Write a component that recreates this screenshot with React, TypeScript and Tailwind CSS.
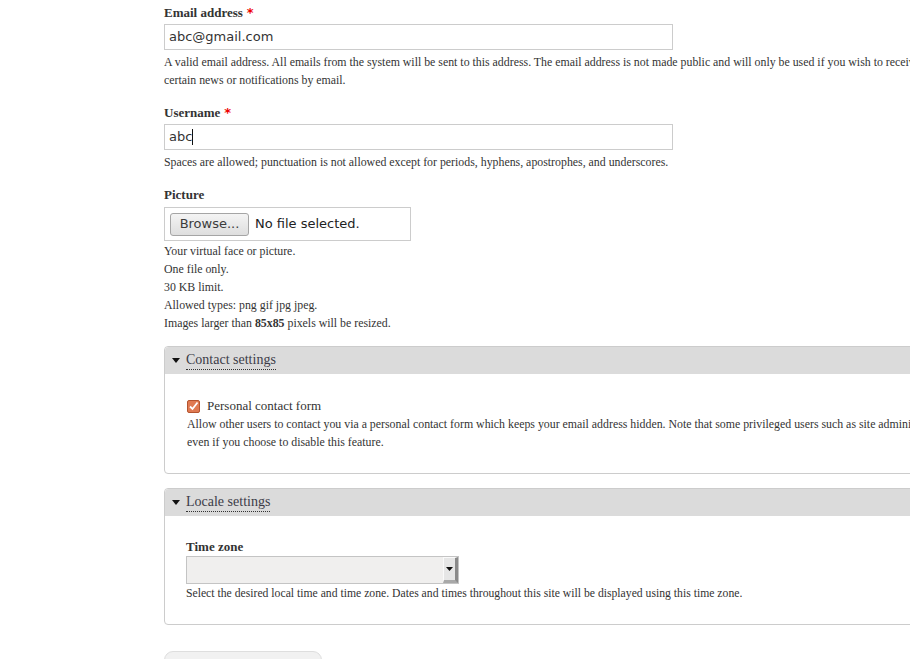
import React from "react";

const serif = { fontFamily: '"Liberation Serif", "Times New Roman", serif' };
const sans = { fontFamily: '"DejaVu Sans", sans-serif' };

function Label({ children, required }: { children: React.ReactNode; required?: boolean }) {
  return (
    <div className="text-[13px] font-bold leading-[18px] text-[#333]" style={serif}>
      {children}
      {required && <span className="ml-[4px] text-[#e00] font-bold" style={sans}>*</span>}
    </div>
  );
}

function Desc({ children, className = "", small }: { children: React.ReactNode; className?: string; small?: boolean }) {
  return (
    <div
      className={(small ? "text-[11.7px] " : "text-[11.85px] ") + "leading-[18px] text-[#333] whitespace-nowrap " + className}
      style={serif}
    >
      {children}
    </div>
  );
}

function Legend({ title }: { title: string }) {
  return (
    <div className="h-[27px] bg-[#dbdbdb] rounded-t-[4px] flex items-center pl-[7px]">
      <svg width="8" height="5" viewBox="0 0 8 5" className="mr-[6px]">
        <polygon points="0,0 8,0 4,5" fill="#111" />
      </svg>
      <span
        className="text-[14px] leading-[18px] text-[#3b3b48] border-b border-dotted border-[#333]"
        style={serif}
      >
        {title}
      </span>
    </div>
  );
}

export default function App() {
  return (
    <div className="w-[910px] h-[659px] overflow-hidden bg-white">
      <div className="pl-[164px] pt-[4px] w-[1200px]">
        <div className="w-[900px]">
          <Label required>Email address</Label>
          <div className="mt-[2px] w-[509px] h-[26px] border border-[#ccc] flex items-center px-[4px] text-[13px] text-[#333]" style={sans}>
            abc@gmail.com
          </div>
          <Desc className="mt-[3px]">
            A valid email address. All emails from the system will be sent to this address. The email address is not made public and will only be used if you wish to receive
            <br />
            certain news or notifications by email.
          </Desc>

          <div className="mt-[15px]">
            <Label required>Username</Label>
          </div>
          <div className="mt-[2px] w-[509px] h-[26px] border border-[#ccc] flex items-center px-[4px] text-[13px] text-[#333]" style={sans}>
            abc<span className="inline-block w-[1px] h-[16px] bg-[#111]" />
          </div>
          <Desc className="mt-[3px]">
            Spaces are allowed; punctuation is not allowed except for periods, hyphens, apostrophes, and underscores.
          </Desc>

          <div className="mt-[15px]">
            <Label>Picture</Label>
          </div>
          <div className="mt-[3px] w-[247px] h-[34px] border border-[#ccc] flex items-center pl-[5px]">
            <div
              className="w-[79px] h-[23px] rounded-[3px] border border-[#a5a5a5] bg-gradient-to-b from-[#f4f4f4] to-[#dedede] flex items-center justify-center text-[13px] text-[#3c3c3c]"
              style={sans}
            >
              Browse...
            </div>
            <span className="ml-[6px] text-[13px] text-[#222]" style={sans}>
              No file selected.
            </span>
          </div>
          <Desc className="mt-[1px]">
            <div>Your virtual face or picture.</div>
            <div>One file only.</div>
            <div>30 KB limit.</div>
            <div>Allowed types: png gif jpg jpeg.</div>
            <div>
              Images larger than <strong>85x85</strong> pixels will be resized.
            </div>
          </Desc>
        </div>

        <div className="mt-[14px] w-[1000px] border border-[#ccc] rounded-[4px]">
          <Legend title="Contact settings" />
          <div className="pl-[22px] pt-[23px] pb-[22px] pr-[10px]">
            <div className="flex items-center h-[18px]">
              <svg width="13" height="13" viewBox="0 0 13 13" className="mr-[7px]">
                <rect x="0.5" y="0.5" width="12" height="12" rx="1.5" fill="#e07a52" stroke="#b4542f" />
                <path d="M3 6.5 L5.5 9 L10.5 2.5" stroke="#fff" strokeWidth="1.8" fill="none" />
              </svg>
              <span className="text-[13px] text-[#333]" style={serif}>
                Personal contact form
              </span>
            </div>
            <Desc>
              Allow other users to contact you via a personal contact form which keeps your email address hidden. Note that some privileged users such as site administrators are still able to contact you
              <br />
              even if you choose to disable this feature.
            </Desc>
          </div>
        </div>

        <div className="mt-[14px] w-[1000px] border border-[#ccc] rounded-[4px]">
          <Legend title="Locale settings" />
          <div className="pl-[21px] pt-[22px] pb-[21px] pr-[10px]">
            <Label>Time zone</Label>
            <div className="w-[273px] h-[28px] border border-[#c4c4c4] bg-[#f0efee] flex justify-end">
              <div className="w-[15px] h-full bg-[#e6e6e6] border-l border-t border-[#fafafa] border-r-[3px] border-b-[3px] border-r-[#8a8a8a] border-b-[#a8a8a8] flex items-center justify-center">
                <svg width="7" height="4" viewBox="0 0 7 4">
                  <polygon points="0,0 7,0 3.5,4" fill="#111" />
                </svg>
              </div>
            </div>
            <Desc className="mt-[1px]" small>
              Select the desired local time and time zone. Dates and times throughout this site will be displayed using this time zone.
            </Desc>
          </div>
        </div>

        <div className="mt-[26px] w-[158px] h-[30px] rounded-[9px] border border-[#dedede] bg-[#f1f1f1]" />
      </div>
    </div>
  );
}
